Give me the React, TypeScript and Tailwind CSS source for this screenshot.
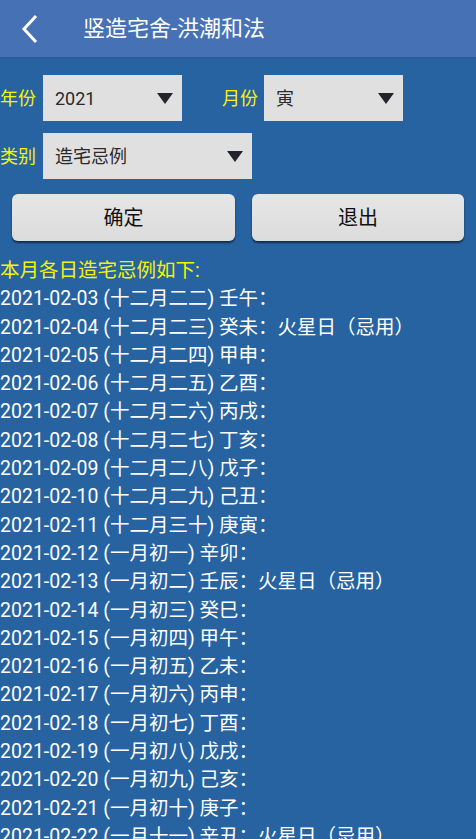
const ROWS: string[] = [
  "2021-02-03 (十二月二二) 壬午：",
  "2021-02-04 (十二月二三) 癸未：火星日（忌用）",
  "2021-02-05 (十二月二四) 甲申：",
  "2021-02-06 (十二月二五) 乙酉：",
  "2021-02-07 (十二月二六) 丙戌：",
  "2021-02-08 (十二月二七) 丁亥：",
  "2021-02-09 (十二月二八) 戊子：",
  "2021-02-10 (十二月二九) 己丑：",
  "2021-02-11 (十二月三十) 庚寅：",
  "2021-02-12 (一月初一) 辛卯：",
  "2021-02-13 (一月初二) 壬辰：火星日（忌用）",
  "2021-02-14 (一月初三) 癸巳：",
  "2021-02-15 (一月初四) 甲午：",
  "2021-02-16 (一月初五) 乙未：",
  "2021-02-17 (一月初六) 丙申：",
  "2021-02-18 (一月初七) 丁酉：",
  "2021-02-19 (一月初八) 戊戌：",
  "2021-02-20 (一月初九) 己亥：",
  "2021-02-21 (一月初十) 庚子：",
  "2021-02-22 (一月十一) 辛丑：火星日（忌用）",
];

const FONT = "font-['Roboto','Noto_Sans_CJK_SC',sans-serif]";

function Arrow() {
  return (
    <svg width="16" height="11" viewBox="0 0 16 11" className="shrink-0">
      <path d="M0 0 H16 L8 11 Z" fill="#23232b" />
    </svg>
  );
}

function Select({ value, width }: { value: string; width: string }) {
  return (
    <div
      className={`flex h-[46px] items-center justify-between bg-[#e0e0e0] pl-[12px] pr-[9px] text-[18px] text-[#2a2a2a] ${width}`}
    >
      <span>{value}</span>
      <Arrow />
    </div>
  );
}

function Button({ label, width }: { label: string; width: string }) {
  return (
    <button
      className={`flex h-[47px] items-center justify-center rounded-[6px] bg-gradient-to-b from-[#e6e6e6] to-[#dcdcdc] text-[20px] text-[#111] shadow-[0_2px_2px_rgba(0,0,0,0.55)] ${width}`}
    >
      {label}
    </button>
  );
}

export default function App() {
  return (
    <div className={`h-[839px] w-[476px] overflow-hidden bg-[#2763a1] ${FONT}`}>
      <div className="flex h-[59px] items-center bg-[#4672b5] border-b-[2px] border-[#2a5c98]">
        <svg width="18" height="30" viewBox="0 0 18 30" className="ml-[21px]">
          <path d="M15 2 L3 15 L15 28" fill="none" stroke="#fff" strokeWidth="3" />
        </svg>
        <span className="ml-[44px] text-[22px] text-white">竖造宅舍-洪潮和法</span>
      </div>

      <div className="mt-[16px] flex items-center">
        <span className="w-[43px] text-[18px] text-[#f5f500]">年份</span>
        <Select value="2021" width="w-[139px]" />
        <span className="ml-[40px] w-[42px] text-[18px] text-[#f5f500]">月份</span>
        <Select value="寅" width="w-[139px]" />
      </div>

      <div className="mt-[12px] flex items-center">
        <span className="w-[43px] text-[18px] text-[#f5f500]">类别</span>
        <Select value="造宅忌例" width="w-[209px]" />
      </div>

      <div className="mt-[15px] flex pl-[12px] gap-[17px]">
        <Button label="确定" width="w-[223px]" />
        <Button label="退出" width="w-[212px]" />
      </div>

      <div className="mt-[16px] text-[19.5px] leading-[28.3px] whitespace-nowrap">
        <div className="text-[#f5f500]">本月各日造宅忌例如下:</div>
        {ROWS.map((r) => (
          <div key={r} className="text-white">
            {r}
          </div>
        ))}
      </div>
    </div>
  );
}
